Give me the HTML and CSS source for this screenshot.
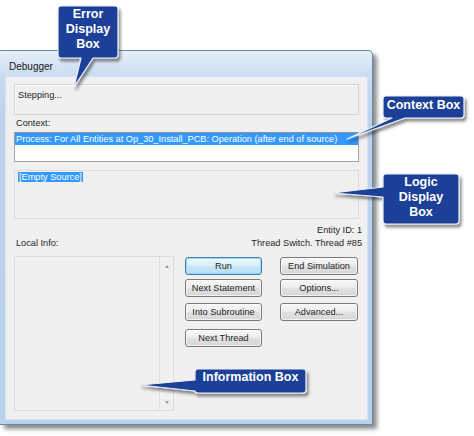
FILE: index.html
```html
<!DOCTYPE html>
<html>
<head>
<meta charset="utf-8">
<title>Debugger</title>
<link rel="stylesheet" href="styles.css">
</head>
<body>
<div class="stage">
  <div class="window">
    <div class="titlebar">Debugger</div>
    <div class="client">
      <div class="status">Stepping...</div>
      <div class="label ctx-label">Context:</div>
      <div class="context-box">
        <div class="sel-row">Process: For All Entities at Op_30_Install_PCB: Operation (after end of source)</div>
      </div>
      <div class="logic-box"><span class="sel">[Empty Source]</span></div>
      <div class="info-row">
        <div class="label local-label">Local Info:</div>
        <div class="ids">
          <div>Entity ID: 1</div>
          <div>Thread Switch. Thread #85</div>
        </div>
      </div>
      <div class="bottom">
        <div class="listbox">
          <div class="list-body"></div>
          <div class="scrollbar">
            <span class="arrow up"></span>
            <span class="arrow down"></span>
          </div>
        </div>
        <div class="buttons">
          <div class="btn default r1">Run</div>
          <div class="btn r1">End Simulation</div>
          <div class="btn r2">Next Statement</div>
          <div class="btn r2">Options...</div>
          <div class="btn r3">Into Subroutine</div>
          <div class="btn r3">Advanced...</div>
          <div class="btn r4">Next Thread</div>
        </div>
      </div>
    </div>
  </div>

  <svg class="tails" width="474" height="436" viewBox="0 0 474 436">
    <defs>
      <filter id="sh" x="-20%" y="-20%" width="140%" height="140%">
        <feDropShadow dx="2" dy="3" stdDeviation="1.5" flood-color="#000" flood-opacity="0.45"/>
      </filter>
    </defs>
    <g class="shape" filter="url(#sh)">
      <path d="M61,6 H115 Q118,6 118,9 V55 Q118,58 115,58 H93 L74,87 L81,58 H61 Q58,58 58,55 V9 Q58,6 61,6 Z"/>
      <path d="M386,96 H461 Q464,96 464,99 V115 Q464,118 461,118 H405 L347,139 L392,118 H386 Q383,118 383,115 V99 Q383,96 386,96 Z"/>
      <path d="M386,174 H456 Q459,174 459,177 V221 Q459,224 456,224 H386 Q383,224 383,221 V197 L333,193 L383,187 V177 Q383,174 386,174 Z"/>
      <path d="M198,369 H303 Q306,369 306,372 V390 Q306,393 303,393 H198 Q195,393 195,391 L140,385 L195,380 V372 Q195,369 198,369 Z"/>
    </g>
  </svg>

  <div class="callout c-error">Error<br>Display<br>Box</div>
  <div class="callout c-context">Context Box</div>
  <div class="callout c-logic">Logic<br>Display<br>Box</div>
  <div class="callout c-info">Information Box</div>
</div>
</body>
</html>
```

FILE: styles.css
```css
* { box-sizing: border-box; }
html, body { margin: 0; padding: 0; }
body {
  background: #ffffff;
  font-family: "Liberation Sans", Arial, sans-serif;
  font-size: 9.2px;
  color: #1e1e1e;
}
.stage {
  position: relative;
  width: 474px;
  height: 436px;
  overflow: hidden;
  padding-top: 50px;
}
.window {
  width: 373px;
  height: 375px;
  display: flex;
  flex-direction: column;
  background: linear-gradient(#e6eff9, #c8dbf0 26px, #bed4ec 60px, #b9d1ea);
  border: 1px solid #6a86aa;
  border-left: none;
  border-radius: 0 5px 0 0;
  box-shadow: 4px 4px 4px rgba(0,0,0,0.45);
  padding: 0 4px 4px 5px;
}
.titlebar {
  height: 25px;
  padding: 9px 0 0 4px;
  line-height: 13px;
  font-size: 10px;
  color: #1a1a1a;
}
.client {
  flex: 1;
  background: #f0f0f0;
  border: 1px solid #d6e2ef;
  padding: 7px 8px 8px 8px;
  display: flex;
  flex-direction: column;
}
.label { line-height: 13px; padding-left: 2px; }
.status {
  height: 31px;
  border: 1px solid #d4d4d4;
  box-shadow: inset 1px 1px 0 #fbfbfb;
  background: #f0f0f0;
  padding: 4px 3px;
  line-height: 13px;
}
.ctx-label { margin-top: 2px; }
.context-box {
  margin-top: 2px;
  height: 30px;
  background: #ffffff;
  border: 1px solid #a3a3a3;
  border-top-color: #8f8f8f;
}
.sel-row {
  height: 12px;
  line-height: 12px;
  padding-left: 1px;
  background: #3399ff;
  color: #ffffff;
  white-space: nowrap;
  overflow: hidden;
}
.logic-box {
  margin-top: 8px;
  height: 49px;
  border: 1px solid #dcdcdc;
  background: #f0f0f0;
  padding: 1px 3px;
  line-height: 10px;
}
.sel {
  background: #3399ff;
  color: #ffffff;
  padding: 0 1px;
}
.info-row {
  margin-top: 5px;
  display: flex;
  justify-content: space-between;
  align-items: flex-end;
  margin-right: -3px;
}
.ids { text-align: right; line-height: 13px; }
.bottom {
  margin-top: 6px;
  display: flex;
  align-items: flex-start;
}
.listbox {
  width: 160px;
  height: 155px;
  border: 1px solid #dcdcdc;
  background: #f0f0f0;
  display: flex;
}
.list-body { flex: 1; }
.scrollbar {
  width: 14px;
  border-left: 1px solid #e2e2e2;
  display: flex;
  flex-direction: column;
  justify-content: space-between;
  align-items: center;
  padding: 8px 0 6px;
}
.arrow {
  width: 0;
  height: 0;
  border-left: 2.5px solid transparent;
  border-right: 2.5px solid transparent;
}
.arrow.up { border-bottom: 3px solid #9a9a9a; }
.arrow.down { border-top: 3px solid #9a9a9a; }
.buttons {
  margin-left: 11px;
  margin-top: 1px;
  display: grid;
  grid-template-columns: 77px 78px;
  column-gap: 18px;
}
.btn {
  height: 18px;
  line-height: 16px;
  text-align: center;
  border: 1px solid #7a7a7a;
  border-radius: 3px;
  background: linear-gradient(#f6f6f6, #eeeeee 45%, #e2e2e2 50%, #d6d6d6);
  box-shadow: inset 0 0 0 1px rgba(255,255,255,0.7);
  color: #1e1e1e;
  white-space: nowrap;
}
.btn.default {
  border-color: #3c7fb1;
  background: linear-gradient(#eaf6fd, #dcf0fb 45%, #c9e7f8 50%, #b8dff5);
  box-shadow: inset 0 0 0 1px rgba(140,210,245,0.8);
}
.r2 { margin-top: 4px; }
.r3 { margin-top: 6px; }
.r4 { margin-top: 8px; }

.tails {
  position: absolute;
  left: 0;
  top: 0;
  pointer-events: none;
}
.shape path {
  fill: #1e3f97;
  stroke: #e9eff9;
  stroke-width: 1.2;
  stroke-linejoin: round;
}
.callout {
  position: absolute;
  color: #ffffff;
  font-weight: bold;
  font-size: 12.5px;
  line-height: 15px;
  text-align: center;
}
.c-error { left: 58px; top: 7px; width: 60px; }
.c-context { left: 383px; top: 98px; width: 81px; }
.c-logic { left: 383px; top: 175px; width: 76px; }
.c-info { left: 195px; top: 370px; width: 111px; }
```
